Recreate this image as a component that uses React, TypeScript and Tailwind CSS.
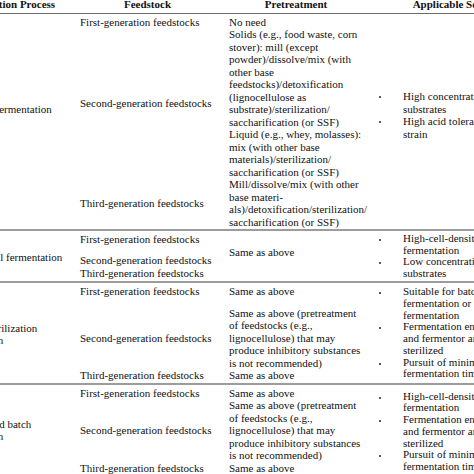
import React from 'react';

type Lines = string[];

// column grid shared by header and body rows (first column runs off the left edge)
const COLS = 'grid grid-cols-[132px_147px_150px_182px]';

function Block({ lines }: { lines: Lines }) {
  return (
    <div>
      {lines.map((t, i) => (
        <div key={i} className="whitespace-nowrap">
          {t}
        </div>
      ))}
    </div>
  );
}

function Bullets({ items, leading }: { items: Lines[]; leading: string }) {
  return (
    <ul className={leading}>
      {items.map((lines, i) => (
        <li key={i} className="flex">
          <span className="w-[24px] shrink-0">
            <span className="block h-[1lh] pt-[6px]">
              <span className="block h-[2px] w-[2px] rounded-full bg-[#222]" />
            </span>
          </span>
          <Block lines={lines} />
        </li>
      ))}
    </ul>
  );
}

function Feed({ text, className = '' }: { text: string; className?: string }) {
  return <div className={`flex items-center pl-[6px] whitespace-nowrap ${className}`}>{text}</div>;
}

const SAME = ['Same as above'];
const NOT_RECOMMENDED = [
  'Same as above (pretreatment',
  'of feedstocks (e.g.,',
  'lignocellulose) that may',
  'produce inhibitory substances',
  'is not recommended)',
];
const ENV_STERILIZED = ['Fermentation environment', 'and fermentor are', 'sterilized'];
const MIN_TIME = ['Pursuit of minimum', 'fermentation time'];

export default function App() {
  return (
    <div className="h-[474px] w-[474px] overflow-hidden bg-white font-['Liberation_Serif','Times_New_Roman',serif] text-[11px] leading-[12.5px] text-[#111]">
      <div className="-mt-[2px] -ml-[58px] w-[611px]">
        {/* Header */}
        <div className={`${COLS} border-b-[1.5px] border-[#6a6a6a] pb-[2px] font-bold`}>
          <div className="pl-[11px] whitespace-nowrap">Fermentation Process</div>
          <div className="text-center">Feedstock</div>
          <div className="text-center">Pretreatment</div>
          <div className="text-center whitespace-nowrap">Applicable Scenarios</div>
        </div>

        {/* Row 1 */}
        <div className={`${COLS} border-b-2 border-[#9c9c9c] pt-[2px] pb-[1px]`}>
          <div className="flex items-center pl-[5px]">
            <div className="mb-[25px] whitespace-nowrap">Anaerobic fermentation</div>
          </div>
          <div className="col-span-2 grid grid-cols-[147px_150px]">
            <Feed text="First-generation feedstocks" />
            <div className="pl-[8px]">
              <Block lines={['No need']} />
            </div>
            <Feed text="Second-generation feedstocks" />
            <div className="pl-[8px]">
              <Block
                lines={[
                  'Solids (e.g., food waste, corn',
                  'stover): mill (except',
                  'powder)/dissolve/mix (with',
                  'other base',
                  'feedstocks)/detoxification',
                  '(lignocellulose as',
                  'substrate)/sterilization/',
                  'saccharification (or SSF)',
                  'Liquid (e.g., whey, molasses):',
                  'mix (with other base',
                  'materials)/sterilization/',
                  'saccharification (or SSF)',
                ]}
              />
            </div>
            <Feed text="Third-generation feedstocks" />
            <div className="pl-[8px]">
              <Block
                lines={[
                  'Mill/dissolve/mix (with other',
                  'base materi-',
                  'als)/detoxification/sterilization/',
                  'saccharification (or SSF)',
                ]}
              />
            </div>
          </div>
          <div className="flex items-center pl-[8px]">
            <div className="mb-[13px]">
              <Bullets
                leading="leading-[12.5px]"
                items={[
                  ['High concentration', 'substrates'],
                  ['High acid tolerance', 'strain'],
                ]}
              />
            </div>
          </div>
        </div>

        {/* Row 2 */}
        <div className={`${COLS} border-b-2 border-[#9c9c9c] pt-[2px] pb-[1.5px]`}>
          <div className="flex items-center pl-[2px]">
            <div className="mt-[2px] whitespace-nowrap">Conventional fermentation</div>
          </div>
          <div>
            <Feed text="First-generation feedstocks" className="mb-[8.5px]" />
            <Feed text="Second-generation feedstocks" />
            <Feed text="Third-generation feedstocks" />
          </div>
          <div className="flex items-center pl-[8px]">
            <div className="mb-[7px]">
              <Block lines={SAME} />
            </div>
          </div>
          <div className="flex items-center pl-[8px]">
            <Bullets
              leading="leading-[11.5px]"
              items={[
                ['High-cell-density', 'fermentation'],
                ['Low concentration', 'substrates'],
              ]}
            />
          </div>
        </div>

        {/* Row 3 */}
        <div className={`${COLS} border-b-2 border-[#9c9c9c] pt-[2px] pb-[1px]`}>
          <div className="flex items-center pl-[5px]">
            <div className="mt-[2px]">
              <Block lines={['Without sterilization', 'fermentation']} />
            </div>
          </div>
          <div className="col-span-2 grid grid-cols-[147px_150px]">
            <Feed text="First-generation feedstocks" className="mb-[9.5px]" />
            <div className="mb-[9.5px] pl-[8px]">
              <Block lines={SAME} />
            </div>
            <Feed text="Second-generation feedstocks" />
            <div className="pl-[8px]">
              <Block lines={NOT_RECOMMENDED} />
            </div>
            <Feed text="Third-generation feedstocks" />
            <div className="pl-[8px]">
              <Block lines={SAME} />
            </div>
          </div>
          <div className="flex items-center pl-[8px]">
            <Bullets
              leading="leading-[11.75px]"
              items={[
                ['Suitable for batch', 'fermentation or fed-batch', 'fermentation'],
                ENV_STERILIZED,
                MIN_TIME,
              ]}
            />
          </div>
        </div>

        {/* Row 4 */}
        <div className={`${COLS} pt-[2px] pb-[4px]`}>
          <div className="flex items-center pl-[5px]">
            <Block lines={['Repeated fed batch', 'fermentation']} />
          </div>
          <div className="col-span-2 grid grid-cols-[147px_150px]">
            <Feed text="First-generation feedstocks" />
            <div className="pl-[8px]">
              <Block lines={SAME} />
            </div>
            <Feed text="Second-generation feedstocks" />
            <div className="pl-[8px]">
              <Block lines={NOT_RECOMMENDED} />
            </div>
            <Feed text="Third-generation feedstocks" />
            <div className="pl-[8px]">
              <Block lines={SAME} />
            </div>
          </div>
          <div className="flex items-center pl-[8px]">
            <div className="mt-[3px]">
              <Bullets
                leading="leading-[11.75px]"
                items={[['High-cell-density', 'fermentation'], ENV_STERILIZED, MIN_TIME]}
              />
            </div>
          </div>
        </div>
      </div>
    </div>
  );
}
